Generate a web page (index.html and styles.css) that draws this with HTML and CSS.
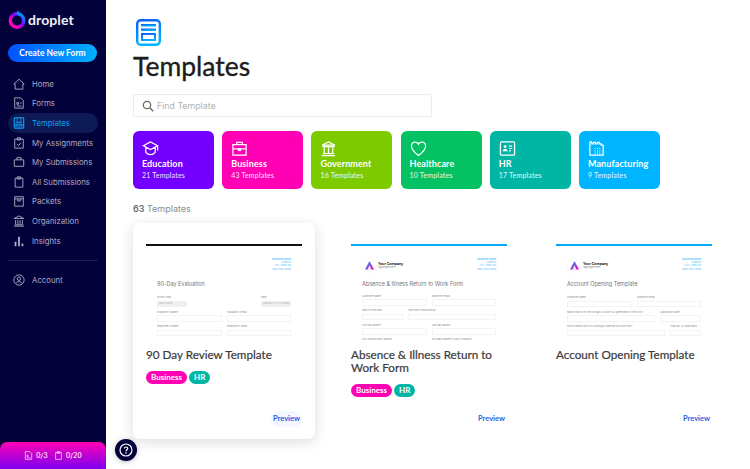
FILE: index.html
```html
<!DOCTYPE html>
<html lang="en">
<head>
  <meta charset="UTF-8" />
  <title>Templates</title>
  <link rel="stylesheet" href="styles.css">
</head>
<body>
  <aside class="sidebar">
    <div class="logo">
      <svg width="18" height="20" viewBox="0 0 18 20"><defs><linearGradient id="lg" x1="0.1" y1="0.8" x2="0.9" y2="0.1"><stop offset="0.15" stop-color="#ff00b8"/><stop offset="0.6" stop-color="#7a00ff"/><stop offset="1" stop-color="#0090ff"/></linearGradient></defs><circle cx="9" cy="11.500" r="6.700" fill="none" stroke="url(#lg)" stroke-width="3.400"/><path d="M9.500 .5c.4 2 1.900 3.200 3.500 4.500l1 1.500-3 .5-2-2z" fill="#0090ff"/></svg>
      <span class="logo-text">droplet</span>
    </div>
    <button class="create-btn">Create New Form</button>
    <nav class="nav">
      <a class="nav-item"><svg viewBox="0 0 14 14"><path d="M1 7l6-5.500L13 7h-1.500v6h-9V7z"/></svg>Home</a>
      <a class="nav-item"><svg viewBox="0 0 14 14"><path d="M2 1h7l3 3v9H2zM4.500 6.500h2v2h-2zM8 7h2M4.500 10.500h5.500"/></svg>Forms</a>
      <a class="nav-item active"><svg viewBox="0 0 14 14"><rect x="1.500" y="1" width="11" height="12" rx="1"/><path d="M4 3.500h2M8 3.500h2M3.500 6h7M3.500 8.500h7v2h-7z"/></svg>Templates</a>
      <a class="nav-item"><svg viewBox="0 0 14 14"><path d="M2 2.500h10V13H2zM5 1h4v2.500H5zM4.500 8l2 2 3-3.500"/></svg>My Assignments</a>
      <a class="nav-item"><svg viewBox="0 0 14 14"><path d="M1.500 4.500h11V12h-11zM4.500 4.500V2h5v2.500"/></svg>My Submissions</a>
      <a class="nav-item"><svg viewBox="0 0 14 14"><path d="M2.500 2.500h9V13h-9zM5 1h4v2.500H5z"/></svg>All Submissions</a>
      <a class="nav-item"><svg viewBox="0 0 14 14"><path d="M2 2h10v11H2zM2 4.500h10M5.500 4.500v2.500h3V4.500"/></svg>Packets</a>
      <a class="nav-item"><svg viewBox="0 0 14 14"><path d="M7 1l5.500 3H1.500zM3 6v5M5.700 6v5M8.300 6v5M11 6v5M2 11.500h10M1 13h12"/></svg>Organization</a>
      <a class="nav-item"><svg viewBox="0 0 14 14"><path class="thick" d="M3 8v5M7 2v11M11 10v3"/></svg>Insights</a>
      <div class="nav-divider"></div>
      <a class="nav-item"><svg viewBox="0 0 14 14"><circle cx="7" cy="7" r="6"/><circle cx="7" cy="5.500" r="2"/><path d="M3.500 11c.8-1.600 2-2 3.500-2s2.700.4 3.500 2"/></svg>Account</a>
    </nav>
    <div class="usage">
      <svg viewBox="0 0 14 14"><path d="M2 1h7l3 3v9H2zM4.500 6.500h2v2h-2zM4.500 10.500h5.500"/></svg><span>0/3</span>
      <svg viewBox="0 0 14 14"><path d="M2.500 2.500h9V13h-9zM5 1h4v2.500H5z"/></svg><span>0/20</span>
    </div>
  </aside>

  <main class="main">
    <svg class="page-icon" width="25" height="27" viewBox="0 0 25 27"><defs><linearGradient id="pg" x1="0" y1="0" x2="0.3" y2="1"><stop offset="0" stop-color="#0a5cff"/><stop offset="1" stop-color="#00b4ff"/></linearGradient></defs><rect x="1.200" y="1.200" width="22.600" height="24.600" rx="3.500" fill="#fff" stroke="url(#pg)" stroke-width="2.400"/><g fill="url(#pg)"><rect x="5" y="5" width="15" height="2.500"/><rect x="5" y="9.500" width="15" height="2.500"/><path d="M5 14h15v8H5zM7 16v4h11v-4z" fill-rule="evenodd"/></g></svg>
    <h1>Templates</h1>

    <div class="search">
      <svg width="12" height="12" viewBox="0 0 12 12"><circle cx="5" cy="5" r="3.700" fill="none" stroke="#666" stroke-width="1.200"/><path d="M7.800 7.800l3.400 3.400" stroke="#666" stroke-width="1.400"/></svg>
      <span>Find Template</span>
    </div>

    <div class="categories">
      <div class="category education">
        <svg viewBox="0 0 18 18"><path d="M9 2L1.500 6 9 10l7.500-4zM4 8v5c1.500 1.800 3 2.500 5 2.500s3.500-.7 5-2.500V8M16.500 6v5"/></svg>
        <b>Education</b><span>21 Templates</span>
      </div>
      <div class="category business">
        <svg viewBox="0 0 18 18"><path d="M2 5h14v11H2zM6 5V2.500h6V5M2 9.500h14M8 9h2v2H8z"/></svg>
        <b>Business</b><span>43 Templates</span>
      </div>
      <div class="category government">
        <svg viewBox="0 0 18 18"><path d="M9 2l7 3.500H2zM2.500 7h13M4.500 8v6M9 8v6M13.500 8v6M3 14.500h12M2 16.500h14"/></svg>
        <b>Government</b><span>16 Templates</span>
      </div>
      <div class="category healthcare">
        <svg viewBox="0 0 18 18"><path d="M9 16.500C4 12.500 1.500 10 1.500 6.500 1.500 4 3.300 2.200 5.500 2.200c1.500 0 2.800.8 3.500 2.200.7-1.400 2-2.200 3.500-2.200 2.200 0 4 1.800 4 4.300 0 3.500-2.500 6-7.500 10z"/></svg>
        <b>Healthcare</b><span>10 Templates</span>
      </div>
      <div class="category hr">
        <svg viewBox="0 0 18 18"><rect x="1.500" y="2" width="15" height="14" rx="1"/><path d="M10.500 6.500h3.500M10.500 9h3.500M10.500 11.500h2"/><circle class="solid" cx="6.500" cy="7" r="1.500"/><path class="solid" d="M4 12c0-1.800 1-2.700 2.500-2.700S9 10.200 9 12z"/></svg>
        <b>HR</b><span>17 Templates</span>
      </div>
      <div class="category manufacturing">
        <svg viewBox="0 0 18 18"><path d="M2 16V2h2v2h2V2.500h2V4h2V2.500h2V4h2v1.500h2V16zM7 9h1M9.500 9h1M12 9h1M7 11.500h1M9.500 11.500h1M12 11.500h1M7 14h1M9.500 14h1M12 14h1"/></svg>
        <b>Manufacturing</b><span>9 Templates</span>
      </div>
    </div>

    <p class="count"><b>63</b> Templates</p>

    <div class="cards">
      <article class="card raised">
        <div class="preview black">
          <div class="pv-head"><div></div><div class="pv-addr"><b>Business Name</b><br>Address<br>City, State Zip<br>(###) ###-####</div></div>
          <p class="pv-title roomy">90-Day Evaluation</p>
          <div class="pv-row"><label class="w-fill">School Year<i class="gray short">2023-2024</i></label><label class="w-short">Date<i class="gray">MM/DD/YYYY HH:MM</i></label></div>
          <div class="pv-row"><label>Evaluator's Name<i></i></label><label>Evaluator's Email<i></i></label></div>
          <div class="pv-row"><label>Employee's Name<i></i></label><label>Employee's Email<i></i></label></div>
        </div>
        <h2>90 Day Review Template</h2>
        <div class="tags"><span class="tag business">Business</span><span class="tag hr">HR</span></div>
        <div class="card-foot"><a class="preview-btn pill">Preview</a></div>
      </article>

      <article class="card">
        <div class="preview">
          <div class="pv-head">
            <div class="pv-brand"><svg width="15" height="15" viewBox="0 0 15 15"><defs><linearGradient id="tri" x1="0" y1="0" x2="1" y2="1"><stop offset="0" stop-color="#00a8ff"/><stop offset="1" stop-color="#ff00b8"/></linearGradient></defs><circle cx="7.500" cy="7.500" r="7.200" fill="#fff" stroke="#f0f0f0" stroke-width=".5"/><path d="M7.500 3L12 11.500H3z" fill="url(#tri)"/><path d="M7.500 7.500l1.800 4H5.700z" fill="#fff"/></svg><span><b>Your Company</b><br><small>Tagline goes here</small></span></div>
            <div class="pv-addr"><b>Business Name</b><br>Address<br>City, State Zip<br>(###) ###-####</div>
          </div>
          <p class="pv-title">Absence &amp; Illness Return to Work Form</p>
          <div class="pv-row"><label>Submitter Name<i></i></label><label>Submitter Email<i></i></label></div>
          <div class="pv-row"><label class="w-third">Date of Interview<i></i></label><label>Interview conducted by<i></i></label></div>
          <div class="pv-row"><label>First day absent<i></i></label><label>Last day absent<i></i></label></div>
          <div class="pv-row"><label># of working days absent<i></i></label><label># of days absent in last 12 months<i></i></label></div>
        </div>
        <h2>Absence &amp; Illness Return to Work Form</h2>
        <div class="tags"><span class="tag business">Business</span><span class="tag hr">HR</span></div>
        <div class="card-foot"><a class="preview-btn">Preview</a></div>
      </article>

      <article class="card">
        <div class="preview">
          <div class="pv-head">
            <div class="pv-brand"><svg width="15" height="15" viewBox="0 0 15 15"><circle cx="7.500" cy="7.500" r="7.200" fill="#fff" stroke="#f0f0f0" stroke-width=".5"/><path d="M7.500 3L12 11.500H3z" fill="url(#tri)"/><path d="M7.500 7.500l1.800 4H5.700z" fill="#fff"/></svg><span><b>Your Company</b><br><small>Tagline goes here</small></span></div>
            <div class="pv-addr"><b>Business Name</b><br>Address<br>City, State Zip<br>(###) ###-####</div>
          </div>
          <p class="pv-title roomy">Account Opening Template</p>
          <div class="pv-row"><label>Submitter Name<i></i></label><label>Submitter Email<i></i></label></div>
          <div class="pv-row"><label class="w-wide">Branch has to fill the 10 digit Account No. generated in the Utility<i></i></label><label>Application Date<i></i></label></div>
          <div class="pv-row"><label class="w-wider">Which branch are you looking to open an account with?<i></i></label><label>Total No. of Applicants<i></i></label></div>
        </div>
        <h2>Account Opening Template</h2>
        <div class="card-foot"><a class="preview-btn">Preview</a></div>
      </article>
    </div>
  </main>

  <button class="help"><svg width="14" height="14" viewBox="0 0 14 14"><circle cx="7" cy="7" r="6" fill="none" stroke="#fff" stroke-width="1.200"/><path d="M5.300 5.500C5.400 4.500 6.100 4 7 4s1.700.6 1.700 1.500C8.700 6.800 7 6.800 7 8.300" fill="none" stroke="#fff" stroke-width="1.200"/><circle cx="7" cy="10" r=".8" fill="#fff"/></svg></button>
</body>
</html>
```
FILE: styles.css
```css
* { box-sizing: border-box; margin: 0; padding: 0; }
body {
  width: 750px;
  height: 469px;
  overflow: hidden;
  display: flex;
  position: relative;
  background: #fff;
  font-family: 'Inter', sans-serif;
  color: #222;
}

/* sidebar */
.sidebar {
  width: 106px;
  height: 469px;
  flex-shrink: 0;
  display: flex;
  flex-direction: column;
  background: #03013a;
  padding-top: 8px;
}
.logo { display: flex; align-items: center; gap: 2px; padding-left: 8px; height: 21px; }
.logo-text { color: #f2f2f6; font-family: 'Lato', sans-serif; font-weight: 700; font-size: 14px; letter-spacing: .1px; margin-top: 2px; }
.create-btn {
  width: 89px;
  height: 18px;
  margin: 15px 0 0 8px;
  border: none;
  border-radius: 9px;
  background: linear-gradient(to right, #0052ff, #00b0ff);
  color: #fff;
  font-family: 'Lato', sans-serif;
  font-weight: 700;
  font-size: 8.500px;
}
.nav { display: flex; flex-direction: column; margin-top: 12px; padding: 0 8px; }
.nav-item {
  height: 19.600px;
  display: flex;
  align-items: center;
  gap: 7px;
  padding-left: 5px;
  border-radius: 10px;
  font-size: 7.800px;
  color: #a9a9c4;
  white-space: nowrap;
}
.nav-item svg { width: 12px; height: 12px; fill: none; stroke: #b6b6cc; stroke-width: 1; flex-shrink: 0; }
.nav-item svg .thick { stroke-width: 2; }
.nav-item.active { background: #0d1a55; color: #12a0f5; }
.nav-item.active svg { stroke: #12a0f5; stroke-width: 1.300; }
.nav-divider { height: 1px; background: #1c1c52; margin: 10px 0 9px; }
.usage {
  margin-top: auto;
  height: 27px;
  border-radius: 7px 7px 0 0;
  background: linear-gradient(to bottom, #ff00b4, #7d00f0);
  display: flex;
  align-items: center;
  justify-content: center;
  gap: 3px;
  color: #f7d6f5;
  font-size: 7px;
  font-weight: 600;
}
.usage svg { width: 9px; height: 9px; fill: none; stroke: #f7d6f5; stroke-width: 1.200; }
.usage span + svg { margin-left: 3px; }

/* main column */
.main { flex: 1; padding: 19px 0 0 27px; min-width: 0; }
.page-icon { display: block; margin-left: 3px; }
h1 { font-family: 'Lato', sans-serif; font-weight: 400; -webkit-text-stroke: .35px #1c1c1c; font-size: 26.500px; line-height: 31px; margin-top: 5px; color: #1c1c1c; }
.search {
  width: 299px;
  height: 23px;
  margin-top: 12px;
  border: 1px solid #ececec;
  border-radius: 2px;
  display: flex;
  align-items: center;
  gap: 3px;
  padding-left: 8px;
  font-size: 8.800px;
  color: #b3b3b3;
}

.categories { display: flex; gap: 8.200px; margin-top: 14px; }
.category {
  width: 81px;
  height: 58px;
  border-radius: 6px;
  padding: 9px 0 0 9px;
  display: flex;
  flex-direction: column;
  color: #fff;
  font-family: 'Lato', sans-serif;
}
.category svg { width: 17px; height: 17px; fill: none; stroke: #fff; stroke-width: 1.300; margin-bottom: 1px; }
.category svg .solid { fill: #fff; stroke: none; }
.category b { font-size: 9px; line-height: 12px; letter-spacing: .1px; white-space: nowrap; }
.category span { font-size: 7px; line-height: 11px; letter-spacing: .2px; opacity: .9; white-space: nowrap; }
.education { background: #7300ff; }
.business { background: #ff00b4; }
.government { background: #7dca00; }
.healthcare { background: #04c264; }
.hr { background: #00b5a3; }
.manufacturing { background: #00b4ff; }

.count { font-size: 9px; color: #8b8b8b; margin-top: 14px; line-height: 12px; }
.count b { font-weight: 600; color: #6e6e6e; }

/* template cards */
.cards { display: flex; gap: 23px; margin-top: 8px; }
.card {
  width: 182px;
  height: 216px;
  flex-shrink: 0;
  padding: 21px 13px 0;
  border-radius: 7px;
  display: flex;
  flex-direction: column;
  background: #fff;
}
.card.raised { box-shadow: 0 3px 14px rgba(0, 0, 0, .14); }
.card h2 { font-family: 'Lato', sans-serif; font-weight: 400; -webkit-text-stroke: .2px #3a3a3a; font-size: 11.700px; line-height: 13px; color: #3a3a3a; margin-top: 8px; }
.tags { display: flex; gap: 2px; margin-top: 10px; }
.tag {
  height: 13px;
  padding: 0 5px;
  border-radius: 7px;
  color: #fff;
  font-family: 'Lato', sans-serif;
  font-weight: 700;
  font-size: 8px;
  line-height: 13px;
}
.card-foot { margin-top: auto; margin-bottom: 12px; display: flex; justify-content: flex-end; }
.preview-btn { height: 16px; padding: 0 2px; border-radius: 8px; font-family: 'Lato', sans-serif; font-weight: 700; font-size: 7.500px; line-height: 16px; color: #2a5fe0; }
.preview-btn.pill { background: #f3f7ff; }

/* miniature form inside the card */
.preview {
  height: 96px;
  overflow: hidden;
  border-top: 2px solid #00a8f5;
  padding: 12px 11px 0;
  font-size: 2.500px;
  color: #888;
}
.preview.black { border-top-color: #111; }
.pv-head { display: flex; justify-content: space-between; align-items: flex-start; height: 23px; }
.pv-addr { text-align: right; color: #5cc4ff; font-size: 2.500px; line-height: 3.200px; }
.pv-brand { display: flex; align-items: center; gap: 1px; font-size: 3.500px; line-height: 3px; color: #222; }
.pv-brand small { font-size: 2px; color: #777; }
.pv-title { font-size: 5.500px; line-height: 7px; color: #777; margin-bottom: 6.500px; white-space: nowrap; }
.pv-title.roomy { margin-bottom: 8px; }
.pv-row { display: flex; gap: 5px; margin-bottom: 3.500px; }
.pv-row label { flex: 1; min-width: 0; line-height: 3px; white-space: nowrap; overflow: hidden; }
.pv-row i { display: block; height: 6.500px; margin-top: 1.500px; border: 1px solid #f3f3f3; }
.pv-row i.gray { background: #f0f0f0; border: none; color: #aaa; font-style: normal; padding-left: 2px; line-height: 6.500px; }
.pv-row i.short { width: 30px; }
.pv-row .w-fill { flex: 1; }
.pv-row .w-short { flex: 0 0 30px; }
.pv-row .w-third { flex: 0 0 41px; }
.pv-row .w-wide { flex: 0 0 88px; }
.pv-row .w-wider { flex: 0 0 98px; }

.help {
  position: absolute;
  left: 115px;
  top: 439px;
  width: 22px;
  height: 22px;
  border: none;
  border-radius: 50%;
  background: #03013a;
  box-shadow: 0 1px 5px rgba(0, 0, 0, .25);
  display: flex;
  align-items: center;
  justify-content: center;
}
```
